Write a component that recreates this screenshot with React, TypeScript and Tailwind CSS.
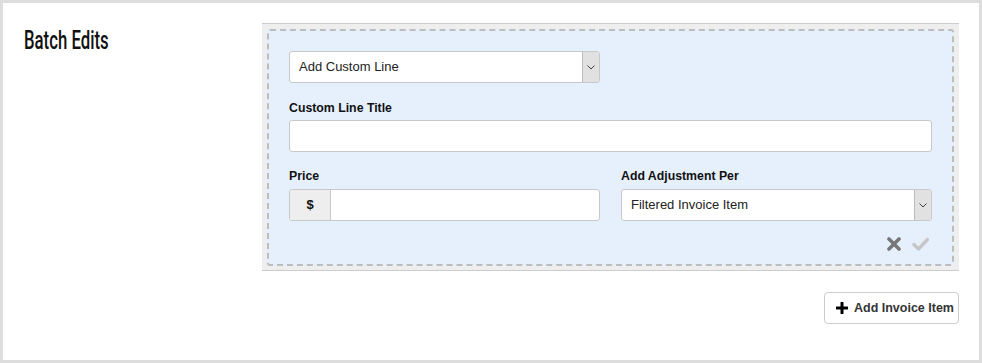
function FakeSelect({ value }: { value: string }) {
    return (
        <div className="flex h-[32px] w-full items-stretch overflow-hidden rounded-[3px] border border-[#c8c8c8] bg-white">
            <div className="flex flex-1 items-center pl-[9px] text-[13px] text-[#222]">{value}</div>
            <div className="flex w-[17px] items-center justify-center border-l border-[#bbb] bg-[#e1e1e1]">
                <svg width="8" height="5" viewBox="0 0 8 5" fill="none">
                    <path d="M0.5 0.5 L4 4 L7.5 0.5" stroke="#444" strokeWidth="1" />
                </svg>
            </div>
        </div>
    );
}

function TimesIcon() {
    return (
        <svg width="14" height="14" viewBox="0 0 14 14">
            <path d="M2 2 L12 12 M12 2 L2 12" stroke="#777" strokeWidth="3.6" strokeLinecap="round" />
        </svg>
    );
}

function CheckIcon() {
    return (
        <svg width="17" height="14" viewBox="0 0 17 14">
            <path d="M2 7.5 L6.5 12 L15.5 2.5" stroke="#c6c6c6" strokeWidth="3.4" fill="none" strokeLinecap="round" strokeLinejoin="round" />
        </svg>
    );
}

function PlusIcon() {
    return (
        <svg width="12" height="12" viewBox="0 0 12 12">
            <rect x="4.5" y="0" width="3" height="12" rx="0.5" fill="#000" />
            <rect x="0" y="4.5" width="12" height="3" rx="0.5" fill="#000" />
        </svg>
    );
}

export default function App() {
    return (
        <div
            className="flex h-[363px] w-[982px] border-[3px] border-[#dddddd] bg-white"
            style={{ fontFamily: '"Liberation Sans", Arial, sans-serif' }}
        >
            <div className="w-[259px] pl-[21px] pt-[23px]">
                <h2
                    className="origin-left scale-x-[0.67] whitespace-nowrap text-[25px] font-medium leading-[30px] text-[#111]"
                    style={{ fontFamily: 'Roboto, sans-serif' }}
                >
                    Batch Edits
                </h2>
            </div>

            <div className="flex w-[697px] flex-col pt-[20px]">
                <div className="border-y border-[#cccccc] bg-[#eeeeee] px-[5px] pb-[4px] pt-[5px]">
                    <div className="rounded-[3px] border-2 border-dashed border-[#bdbdbd] bg-[#e6f0fd] px-[20px] pb-[13px] pt-[20px]">
                        <div className="w-[311px]">
                            <FakeSelect value="Add Custom Line" />
                        </div>

                        <label className="mt-[18px] mb-[4px] block text-[12.3px] font-bold leading-[15px] text-[#111]">
                            Custom Line Title
                        </label>
                        <div className="h-[32px] rounded-[3px] border border-[#c8c8c8] bg-white"></div>

                        <div className="mt-[17px] grid grid-cols-2 gap-x-[21px]">
                            <div>
                                <label className="mb-[5px] block text-[12.3px] font-bold leading-[15px] text-[#111]">
                                    Price
                                </label>
                                <div className="flex h-[32px] overflow-hidden rounded-[3px] border border-[#c8c8c8] bg-white">
                                    <div className="flex w-[41px] items-center justify-center border-r border-[#c8c8c8] bg-[#eeeeee] text-[13px] font-bold text-[#111]">
                                        $
                                    </div>
                                    <div className="flex-1"></div>
                                </div>
                            </div>
                            <div>
                                <label className="mb-[5px] block text-[12.3px] font-bold leading-[15px] text-[#111]">
                                    Add Adjustment Per
                                </label>
                                <FakeSelect value="Filtered Invoice Item" />
                            </div>
                        </div>

                        <div className="mt-[16px] flex items-center justify-end gap-[11px] pr-[3px]">
                            <TimesIcon />
                            <CheckIcon />
                        </div>
                    </div>
                </div>

                <div className="mt-[21px] flex justify-end">
                    <button className="flex h-[32px] items-center gap-[6px] rounded-[4px] border border-[#cccccc] bg-white pl-[11px] pr-[4px] text-[12.5px] font-bold text-[#333]">
                        <PlusIcon />
                        Add Invoice Item
                    </button>
                </div>
            </div>
        </div>
    );
}
